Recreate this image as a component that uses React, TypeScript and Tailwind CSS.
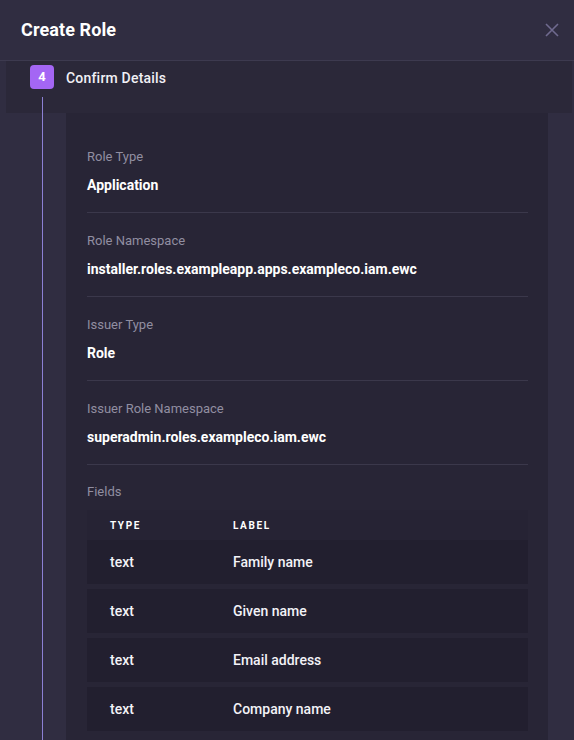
import React from "react";

const sections = [
  { label: "Role Type", value: "Application" },
  { label: "Role Namespace", value: "installer.roles.exampleapp.apps.exampleco.iam.ewc" },
  { label: "Issuer Type", value: "Role" },
  { label: "Issuer Role Namespace", value: "superadmin.roles.exampleco.iam.ewc" },
];

const fields = ["Family name", "Given name", "Email address", "Company name"];

export default function App() {
  return (
    <div
      className="h-[740px] w-full overflow-hidden bg-[#302d41] text-white flex flex-col"
      style={{ fontFamily: "Roboto, 'Noto Sans', sans-serif" }}
    >
      {/* Header */}
      <div className="h-[61px] shrink-0 border-b border-[#3d3a4f] flex items-center justify-between pl-[21px] pr-[15px]">
        <h1 className="text-[18px] font-bold leading-none tracking-[0.1px]">Create Role</h1>
        <svg width="14" height="14" viewBox="0 0 14 14" className="text-[#6f6a8f]">
          <path d="M1 1L13 13M13 1L1 13" stroke="currentColor" strokeWidth="1.6" />
        </svg>
      </div>

      {/* Step band */}
      <div className="ml-[6px] mr-[2px] h-[52px] shrink-0 bg-[#2b2839] flex">
        <div className="w-[60px] shrink-0 flex flex-col pl-[24px] pt-[4px]">
          <div className="w-[24px] h-[24px] rounded-[4px] bg-[#a466f4] flex items-center justify-center text-[13px] font-bold">
            4
          </div>
          <div className="ml-[12px] mt-[8px] w-px flex-1 bg-[#8c80d4]" />
        </div>
        <div className="flex items-start pt-[7px]">
          <span className="text-[14px] font-medium leading-[20px] tracking-[0.2px] text-[#f1f0f5]">Confirm Details</span>
        </div>
      </div>

      {/* Body */}
      <div className="flex flex-1 ml-[6px] min-h-0">
        <div className="w-[60px] shrink-0 pl-[36px]">
          <div className="w-px h-full bg-[#8c80d4]" />
        </div>
        <div className="w-[482px] shrink-0 bg-[#282536] pt-[16px] pl-[21px] pr-[20px]">
          {sections.map((s) => (
            <div key={s.label} className="border-b border-[#3b384b] pt-[18px] pb-[17px]">
              <div className="text-[13px] leading-[20px] text-[#918ea1]">{s.label}</div>
              <div className="mt-[8px] text-[14px] font-bold leading-[20px] text-white">{s.value}</div>
            </div>
          ))}
          <div className="pt-[17px]">
            <div className="text-[13px] leading-[20px] text-[#918ea1]">Fields</div>
            <div className="mt-[8px] flex flex-col">
              <div className="h-[30px] bg-[#262334] flex items-center text-[10px] font-bold tracking-[0.16em] text-white">
                <div className="w-[146px] pl-[23px]">TYPE</div>
                <div>LABEL</div>
              </div>
              <div className="flex flex-col gap-[5px]">
                {fields.map((f) => (
                  <div key={f} className="h-[44px] bg-[#221f2f] flex items-center text-[14px] font-medium text-[#f3f2f7]">
                    <div className="w-[146px] pl-[23px]">text</div>
                    <div>{f}</div>
                  </div>
                ))}
              </div>
            </div>
          </div>
        </div>
      </div>
    </div>
  );
}
